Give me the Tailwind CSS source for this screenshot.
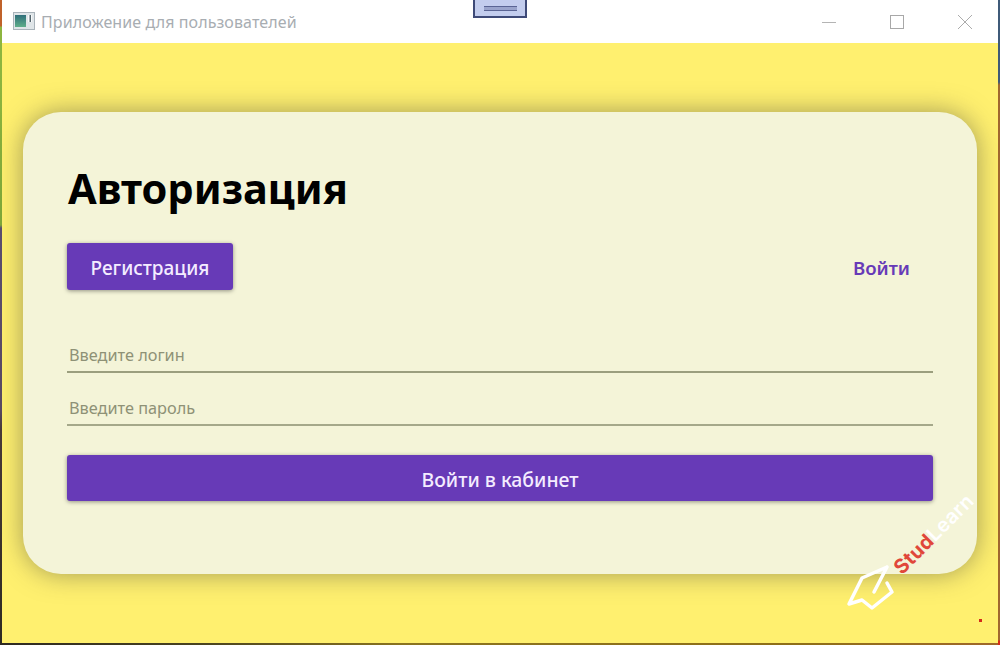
<!DOCTYPE html>
<html lang="ru">
<head>
<meta charset="utf-8">
<script src="https://cdn.jsdelivr.net/npm/@tailwindcss/browser@4"></script>
</head>
<body class="m-0 w-[1000px] h-[645px] overflow-hidden bg-[#fff06f] font-['Noto_Sans','Open_Sans',sans-serif]">
<div class="relative w-[1000px] h-[645px] flex">
  <div class="w-[2px] shrink-0 bg-[linear-gradient(to_bottom,#c0622a_0,#c0622a_26px,#8db53f_27px,#8db53f_74px,#7fa838_225px,#5c4f70_228px,#5a4a62_410px,#4a3a38_430px,#2e2a22_645px)]"></div>
  <div class="flex-1 flex flex-col min-w-0">
    <header class="h-[43px] shrink-0 bg-white flex items-center pl-[11px] pt-px">
      <svg width="22" height="18" viewBox="0 0 22 18" class="mr-[6px] -mt-[2px]">
        <defs><linearGradient id="g" x1="0" y1="0" x2="0" y2="1"><stop offset="0" stop-color="#2f6f7a"/><stop offset="1" stop-color="#5fae8a"/></linearGradient></defs>
        <rect x="0.5" y="0.5" width="21" height="17" fill="#dfe5e8" stroke="#a9b3ba"/>
        <rect x="2" y="3" width="11" height="12" fill="url(#g)"/>
        <rect x="15" y="3" width="4" height="7" fill="#f7f9fa"/>
        <rect x="16.5" y="3" width="1.5" height="7" fill="#56666e"/>
      </svg>
      <span class="text-[16px] leading-none text-[#a8adb2] -mt-[1px] tracking-[0.1px]">Приложение для пользователей</span>
      <div class="ml-auto flex items-center gap-[52px] pr-[25px]">
        <svg width="16" height="16" viewBox="0 0 16 16"><path d="M1 8.5H15" stroke="#b4b4b4" stroke-width="1"/></svg>
        <svg width="16" height="16" viewBox="0 0 16 16"><rect x="1.5" y="1.5" width="13" height="13" fill="none" stroke="#a8a8a8"/></svg>
        <svg width="16" height="16" viewBox="0 0 16 16"><path d="M1 1L15 15M15 1L1 15" stroke="#ababab" stroke-width="1"/></svg>
      </div>
    </header>
    <main class="flex-1 pl-[21px] pr-[21px] pt-[69px]">
      <section class="h-[462px] rounded-[38px] bg-[#f4f4d8] shadow-[0_0_26px_rgba(70,70,60,0.5)] pl-[44px] pr-[44px] pt-[48px]">
        <h1 class="pl-px text-[41.5px] leading-[56px] font-bold text-black">Авторизация</h1>
        <div class="flex items-center justify-between mt-[27px]">
          <button class="w-[166px] h-[47px] pt-[3px] rounded-[3px] bg-[#673ab7] text-[#f4ecff] text-[19px] font-medium shadow-[0_1px_4px_rgba(0,0,0,0.4)]">Регистрация</button>
          <span class="pt-[3px] text-[18.6px] font-semibold text-[#673ab7] mr-[23px]">Войти</span>
        </div>
        <div class="mt-[51px] h-[32px] pt-px border-b-2 border-[#9b9e7e] pl-[2px] text-[16.3px] leading-[26px] text-[#8e9176]">Введите логин</div>
        <div class="mt-[22px] h-[31px] border-b-2 border-[#a5a88a] pl-[2px] text-[16.3px] leading-[26px] text-[#8e9176]">Введите пароль</div>
        <button class="block w-full mt-[29px] h-[46px] pt-[3px] rounded-[3px] bg-[#673ab7] text-[#f4ecff] text-[19.4px] font-medium shadow-[0_1px_4px_rgba(0,0,0,0.4)]">Войти в кабинет</button>
      </section>
    </main>
    <div class="h-[2px] shrink-0 bg-[linear-gradient(to_right,#2e2a22_0,#4a4420_200px,#8a7420_400px,#8f6f18_800px,#a0682a_996px)]"></div>
  </div>
  <div class="w-[2px] shrink-0 bg-[linear-gradient(to_bottom,#3f5a78_0,#3f5a78_82px,#a0682f_85px,#a0682f_640px,#d92a14_641px)]"></div>

  <div class="absolute left-[473px] top-0 w-[54px] h-[18px] bg-[#c3cdee] border-2 border-t-0 border-[#3e4a78] flex items-center justify-center">
    <div class="w-[33px] h-[5px] border-y border-[#5a6494] bg-[#9aa4cc]"></div>
  </div>
  <div class="absolute left-[882px] top-[524px] -rotate-45 origin-center whitespace-nowrap text-[20px] leading-none font-bold font-['Inter',sans-serif] tracking-[0.3px]"><span class="text-[#e0473a]">Stud</span><span class="text-white font-semibold">Learn</span></div>
  <svg class="absolute left-[845px] top-[563px]" width="50" height="48" viewBox="0 0 50 48" fill="none" stroke="#ffffff" stroke-width="3.5" stroke-linecap="round" stroke-linejoin="round">
    <path d="M42 4L17 15L4 41L17 37L27 45L47 29L42 20M42 4L29 29"/>
  </svg>
  <div class="absolute left-[979px] top-[619px] w-[3px] h-[3px] bg-[#d42a1a]"></div>
</div>
</body>
</html>
